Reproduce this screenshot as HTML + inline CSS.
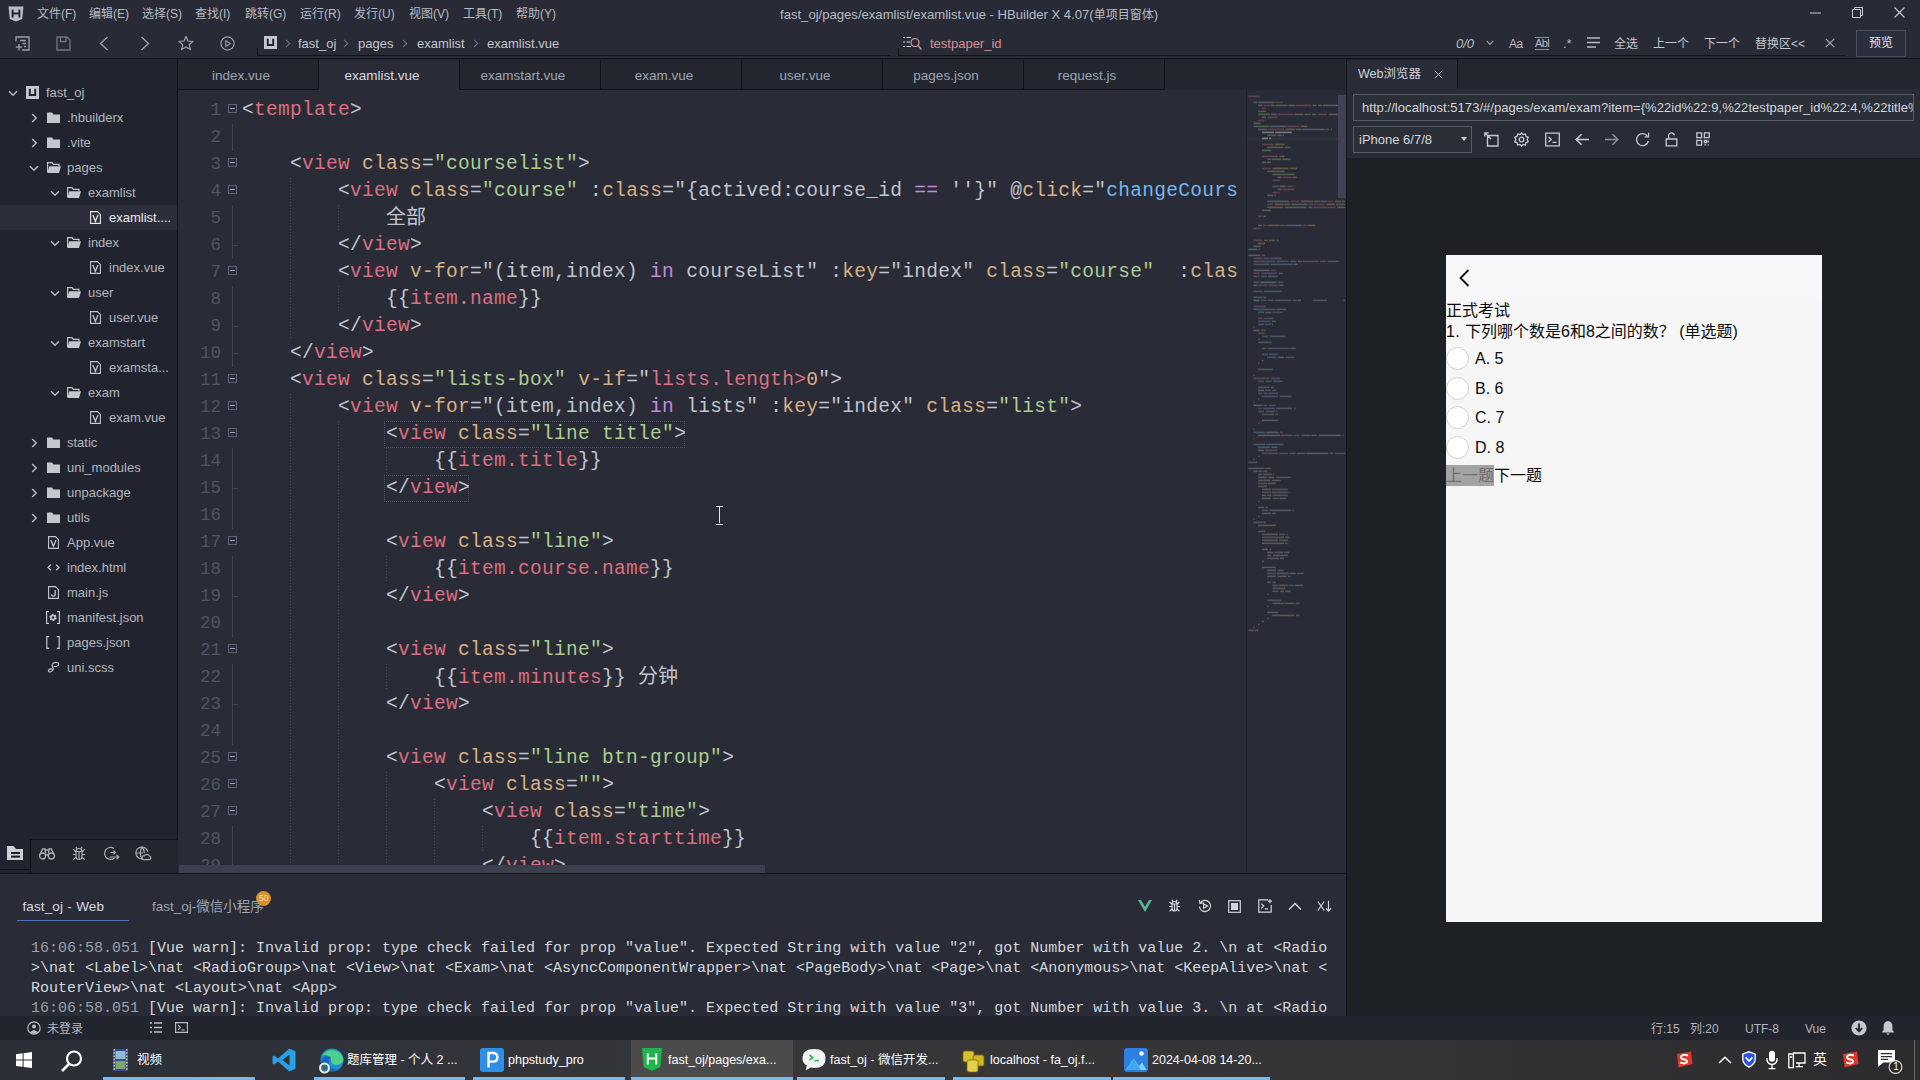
<!DOCTYPE html>
<html lang="zh-CN"><head><meta charset="utf-8"><title>HBuilder X</title>
<style>
*{box-sizing:border-box;margin:0;padding:0}
html,body{width:1920px;height:1080px;overflow:hidden;background:#21242e;}
body{position:relative;font-family:"Liberation Sans","Noto Sans CJK SC",sans-serif;color:#abb2bf;font-size:13px;}
.abs{position:absolute}
svg{display:block;overflow:visible}
/* top */
#titlebar{position:absolute;left:0;top:0;width:1920px;height:28px;background:#282b35;}
#toolbar{position:absolute;left:0;top:28px;width:1920px;height:31px;background:#282b35;}
#sidebar{position:absolute;left:0;top:59px;width:178px;height:814px;background:#21242e;}
#editor{position:absolute;left:178px;top:59px;width:1168px;height:814px;background:#292c36;}
#right{position:absolute;left:1347px;top:59px;width:573px;height:957px;background:#21252b;}
#console{position:absolute;left:0;top:873px;width:1347px;height:143px;background:#292c36;}
#status{position:absolute;left:0;top:1016px;width:1920px;height:24px;background:#22242e;}
#taskbar{position:absolute;left:0;top:1040px;width:1920px;height:40px;background:#2f2f2f;}
/* editor */
#tabbar{position:absolute;left:0;top:0;width:1167px;height:31px;background:#23262f;}
.tab{position:absolute;top:1px;width:141px;height:30px;line-height:31px;text-align:center;font-size:13.5px;padding-right:14px;color:#9da5b4;border-right:1px solid #12141b;border-bottom:1px solid #12141b;background:#23262f;}
.tab.act{background:#292c36;color:#d7dae0;border-bottom-color:#292c36;}
#code{position:absolute;left:1px;top:38px;width:1058px;height:770px;overflow:hidden;font-family:"Liberation Mono","Noto Sans CJK SC",monospace;font-size:19.5px;letter-spacing:0.3px;line-height:27px;color:#c0c5ce;}
.ln{position:relative;height:27px;}
.no{position:absolute;left:0;top:0;width:42px;text-align:right;color:#4f5464;font-size:17.5px;letter-spacing:0;}
.cd{position:absolute;left:63px;top:0;white-space:pre;}
.cd b{font-weight:normal}
b.t{color:#dc6f80}b.a{color:#d9b083}b.s{color:#a9cf90}b.k{color:#c688e0}b.f{color:#74b6ee}b.n{color:#d9b083}
b.c{font-size:20px;letter-spacing:0}
.fb{position:absolute;left:49px;top:7px;width:9px;height:9px;border:1px solid #5f6478;}
.fb:after{content:"";position:absolute;left:1px;top:3px;width:5px;height:1px;background:#a0a5b5}
.fl{position:absolute;left:53px;top:0;width:1px;height:27px;background:#3e4451}
.fe{position:absolute;left:53px;top:0;width:1px;height:27px;background:#3e4451}
.fe:after{content:"";position:absolute;left:1px;top:13px;width:5px;height:1px;background:#3e4451}
.ig{position:absolute;width:1px;background:repeating-linear-gradient(to bottom,#474c59 0,#474c59 1px,transparent 1px,transparent 3px);}
.mb{position:absolute;height:27px;border:1px dotted #4b5263;}
#hscroll{position:absolute;left:1px;top:806px;width:1067px;height:8px;}
#hscroll i{position:absolute;left:0;top:0;width:586px;height:8px;background:#3c404e}
#minimap{position:absolute;left:1068px;top:31px;width:100px;height:783px;border-left:1px solid #1f222b;}
/* sidebar */
#sidebar{border-right:1px solid #12141b;}
.tr{position:absolute;left:0;width:177px;height:25px;font-size:13px;color:#b1b6bf;}
.tr.sel{background:#2c2f3a;color:#e9ebee}
.tr span{position:absolute;top:0;line-height:25px;white-space:nowrap}
#sbbar{position:absolute;left:0;top:780px;width:177px;height:34px;}
#sbbar:before{content:"";position:absolute;left:30px;top:0;width:147px;height:34px;border-top:1px solid #12141b;border-left:1px solid #12141b;background:#23262f}
#sbact{position:absolute;left:0;top:0;width:30px;height:31px;border-bottom:1px solid #12141b;background:#21242e}
/* top */
.mn{position:absolute;top:1px;line-height:27px;font-size:12px;color:#b6bbc4;white-space:nowrap}
#wtitle{position:absolute;left:780px;top:1px;line-height:27px;font-size:13.1px;color:#b6bbc4;white-space:nowrap}
#toolbar{border-bottom:1px solid #12141b}
#bc{position:absolute;left:257px;top:20px;width:633px;height:8px;border-left:1px solid #12141b;border-bottom:1px solid #12141b}
#sb{position:absolute;left:898px;top:20px;width:947px;height:8px;border-left:1px solid #12141b;border-bottom:1px solid #12141b}
.bct{position:absolute;top:1px;line-height:30px;font-size:13px;color:#c2c6ce;white-space:nowrap}
#pv{position:absolute;left:1856px;top:2px;width:50px;height:27px;border:1px solid #4a4f66;background:#2b2e3d;color:#e6e8ec;font-size:12px;line-height:25px;text-align:center}
/* right */
#right{background:#1d2025;border-left:0}
#rtab{position:absolute;left:0;top:1px;width:111px;height:29px;background:#292c36;border-right:1px solid #12141b;padding-left:11px;line-height:28px;font-size:12.5px;color:#d0d4db;white-space:nowrap}
#right:before{content:"";position:absolute;left:111px;top:0;width:462px;height:30px;background:#23262f;border-bottom:1px solid #12141b;}
#rbar{position:absolute;left:0;top:30px;width:573px;height:70px;background:#292c36;border-bottom:1px solid #1b1d23}
#url{position:absolute;left:6px;top:5px;width:561px;height:27px;border:1px solid #565b68;background:#2b2f38;padding-left:8px;padding-right:4px;line-height:25px;font-size:13px;color:#d3d6dc;white-space:nowrap;overflow:hidden;letter-spacing:0.05px}
#dev{position:absolute;left:6px;top:37px;width:119px;height:27px;border:1px solid #565b68;background:#2b2f38;padding-left:5px;line-height:25px;font-size:13px;color:#d3d6dc;white-space:nowrap}
#dev i{position:absolute;left:107px;top:10px;border:3.5px solid transparent;border-top:4px solid #d3d6dc;border-bottom:0}
#phone{position:absolute;left:99px;top:196px;width:376px;height:667px;background:linear-gradient(#f8f7fa 0,#f8f7fa 44px,#f6f6f7 44px);color:#111;font-family:"Liberation Sans","Noto Sans CJK SC",sans-serif}
.pt{position:absolute;left:0;font-size:16px;line-height:21px;white-space:nowrap;color:#0b0b0b}
.rd{position:absolute;left:0;height:24px;}
.rd i{position:absolute;left:0;top:-1px;width:23px;height:23px;border:1px solid #d1d1d1;border-radius:50%;background:#fff}
.rd span{position:absolute;left:29px;top:0;line-height:21px;font-size:16px;white-space:nowrap;color:#0b0b0b}
.dis{background:#a3a3a3;color:#6f6f6f;display:inline-block;height:21px}
/* console */
#console{border-top:1px solid #12141b;border-right:1px solid #12141b}
.ct{position:absolute;top:22px;line-height:22px;font-size:13.5px;color:#9da5b4;white-space:nowrap}
.ct.act{color:#d7dae0}
#cul{position:absolute;left:17px;top:46px;width:112px;height:1px;background:#4c74b4}
#badge{position:absolute;left:256px;top:17px;width:15px;height:15px;border-radius:50%;background:#d98e34;color:#f7deb0;font-size:9px;line-height:15px;text-align:center;letter-spacing:-0.3px}
#clog{position:absolute;left:31px;top:65px;width:1310px;font-family:"Liberation Mono","Noto Sans CJK SC",monospace;font-size:15px;line-height:20px;color:#d3d7dd;overflow:hidden;height:81px}
#clog div{white-space:pre;height:20px}
#clog b{font-weight:normal;color:#99a0a8}
/* status */
.st{position:absolute;top:1px;line-height:24px;font-size:12px;color:#b1b6bf;white-space:nowrap}
/* taskbar */
#taskbar{background:linear-gradient(90deg,#2a2e36 0%,#30333a 20%,#373739 40%,#343436 70%,#2c2c2e 100%);font-family:"Liberation Sans","Noto Sans CJK SC",sans-serif}
.ti{position:absolute;top:0;height:40px;border-bottom:3px solid #76b9ed;}
.ti.act{background:#4b4b4b}
.ti span{position:absolute;top:1px;line-height:38px;font-size:12.5px;color:#fff;white-space:nowrap}
#ime{position:absolute;left:1813px;top:0;line-height:39px;font-size:14px;color:#fff}
#ncnt{position:absolute;left:1892px;top:20px;font-size:10px;line-height:14px;color:#fff;width:8px;text-align:center}
#tedge{position:absolute;left:1914px;top:0;width:1px;height:40px;background:#6a6a6a}
#vthumb{position:absolute;left:91px;top:5px;width:8px;height:103px;background:#3e4252}

#ibeam{position:absolute;left:538px;top:447px;width:7px;height:17px;}
#ibeam:before{content:"";position:absolute;left:3px;top:0;width:1px;height:17px;background:#e8e8e8}
#ibeam:after{content:"";position:absolute;left:0;top:0;width:7px;height:17px;border-top:1px solid #e8e8e8;border-bottom:1px solid #e8e8e8}

#rsep{position:absolute;left:1346px;top:59px;width:1px;height:957px;background:#12141b}

</style></head>
<body>
<div id="titlebar">
<svg class="abs" style="left:8px;top:6px" width="16" height="16" viewBox="0 0 16 16"><path d="M0.5 0.5 H15.5 L14.2 13 L8 15.5 L1.8 13 Z" fill="#b9bdc6"/><path d="M4.6 3.5 V11.5 M11.4 3.5 V11.5 M4.6 7.5 H11.4" stroke="#21252b" stroke-width="1.9" fill="none"/></svg>
<span class="mn" style="left:37px">文件(F)</span>
<span class="mn" style="left:89px">编辑(E)</span>
<span class="mn" style="left:142px">选择(S)</span>
<span class="mn" style="left:195px">查找(I)</span>
<span class="mn" style="left:245px">跳转(G)</span>
<span class="mn" style="left:300px">运行(R)</span>
<span class="mn" style="left:354px">发行(U)</span>
<span class="mn" style="left:409px">视图(V)</span>
<span class="mn" style="left:463px">工具(T)</span>
<span class="mn" style="left:516px">帮助(Y)</span>
<span id="wtitle">fast_oj/pages/examlist/examlist.vue - HBuilder X 4.07(<span style="font-size:12px">单项目窗体</span>)</span>
<svg class="abs" style="left:1810px;top:12px" width="11" height="2" viewBox="0 0 11 2"><path d="M0 1 H11" stroke="#c8ccd4" stroke-width="1"/></svg>
<svg class="abs" style="left:1852px;top:7px" width="11" height="11" viewBox="0 0 11 11"><path d="M0.5 2.5 H8.5 V10.5 H0.5 Z M2.5 2.5 V0.5 H10.5 V8.5 H8.5" fill="none" stroke="#c8ccd4" stroke-width="1"/></svg>
<svg class="abs" style="left:1894px;top:7px" width="11" height="11" viewBox="0 0 11 11"><path d="M0.5 0.5 L10.5 10.5 M10.5 0.5 L0.5 10.5" fill="none" stroke="#c8ccd4" stroke-width="1.1"/></svg>
</div>
<div id="toolbar">
<svg class="abs" style="left:15px;top:8px" width="15" height="15" viewBox="0 0 15 15"><g fill="none" stroke="#9aa0ab" stroke-width="1.3"><path d="M1 5.5 V1 H14 V14 H7"/><path d="M5 4.5 H11 M7.5 7.5 H11 M9 10.5 H11"/><path d="M4 8 V14.5 M0.8 11.2 H7.2"/></g></svg>
<svg class="abs" style="left:56px;top:8px" width="15" height="15" viewBox="0 0 15 15"><g fill="none" stroke="#6f7683" stroke-width="1.3"><path d="M1 1 H11 L14 4 V14 H1 Z"/><path d="M4.5 1 V5.5 H10 V1"/></g></svg>
<svg class="abs" style="left:99px;top:8px" width="10" height="15" viewBox="0 0 10 15"><path d="M8.5 1 L1.5 7.5 L8.5 14" fill="none" stroke="#9aa0ab" stroke-width="1.4"/></svg>
<svg class="abs" style="left:140px;top:8px" width="10" height="15" viewBox="0 0 10 15"><path d="M1.5 1 L8.5 7.5 L1.5 14" fill="none" stroke="#9aa0ab" stroke-width="1.4"/></svg>
<svg class="abs" style="left:178px;top:7px" width="16" height="16" viewBox="0 0 16 16"><path d="M8 1.3 L10 6 L15 6.4 L11.2 9.7 L12.4 14.6 L8 12 L3.6 14.6 L4.8 9.7 L1 6.4 L6 6 Z" fill="none" stroke="#9aa0ab" stroke-width="1.2" stroke-linejoin="round"/></svg>
<svg class="abs" style="left:220px;top:8px" width="15" height="15" viewBox="0 0 15 15"><circle cx="7.5" cy="7.5" r="6.6" fill="none" stroke="#9aa0ab" stroke-width="1.2"/><path d="M5.8 4.6 L10.3 7.5 L5.8 10.4 Z" fill="none" stroke="#9aa0ab" stroke-width="1.1"/></svg>
<div id="bc"></div>
<svg class="abs" style="left:264px;top:8px" width="13" height="13" viewBox="0 0 13 13"><rect width="13" height="13" fill="#c3c7ce"/><path d="M3.8 2.8 V9 H9.2 V2.8" fill="none" stroke="#21242e" stroke-width="1.9"/></svg>
<span class="bct" style="left:298px">fast_oj</span>
<span class="bct" style="left:358px">pages</span>
<span class="bct" style="left:417px">examlist</span>
<span class="bct" style="left:487px">examlist.vue</span>
<svg class="abs" style="left:285px;top:11px" width="6" height="9" viewBox="0 0 6 9"><path d="M1 0.8 L4.8 4.5 L1 8.2" fill="none" stroke="#6b7280" stroke-width="1.1"/></svg>
<svg class="abs" style="left:343px;top:11px" width="6" height="9" viewBox="0 0 6 9"><path d="M1 0.8 L4.8 4.5 L1 8.2" fill="none" stroke="#6b7280" stroke-width="1.1"/></svg>
<svg class="abs" style="left:402px;top:11px" width="6" height="9" viewBox="0 0 6 9"><path d="M1 0.8 L4.8 4.5 L1 8.2" fill="none" stroke="#6b7280" stroke-width="1.1"/></svg>
<svg class="abs" style="left:473px;top:11px" width="6" height="9" viewBox="0 0 6 9"><path d="M1 0.8 L4.8 4.5 L1 8.2" fill="none" stroke="#6b7280" stroke-width="1.1"/></svg>
<div id="sb"></div>
<svg class="abs" style="left:903px;top:8px" width="19" height="14" viewBox="0 0 19 14"><g fill="none" stroke="#d0d3d9" stroke-width="1.2"><path d="M0 1.5 H2 M3.5 1.5 H8 M0 6 H2 M3.5 6 H7 M0 10.5 H2 M3.5 10.5 H8"/></g><circle cx="12" cy="6.5" r="4" fill="none" stroke="#d9a29e" stroke-width="1.2"/><path d="M15 9.5 L18.5 13.5" stroke="#d9a29e" stroke-width="1.2"/></svg>
<span class="bct" style="left:930px;color:#dc8f8f">testpaper_id</span>
<span class="bct" style="left:1456px;font-style:italic;color:#b6bbc4">0/0</span>
<svg class="abs" style="left:1486px;top:12px" width="8" height="6" viewBox="0 0 8 6"><path d="M0.7 0.8 L4 4.4 L7.3 0.8" fill="none" stroke="#9aa0ab" stroke-width="1.1"/></svg>
<span class="bct" style="left:1509px;font-size:12px;letter-spacing:-0.5px;color:#b6bbc4">Aa</span>
<span class="bct" style="left:1535px;font-size:11px;letter-spacing:-0.6px;color:#b6bbc4;border-top:1px solid #8a8f9a;border-bottom:1px solid #8a8f9a;line-height:11px;top:9px;height:13px">Abl</span>
<span class="bct" style="left:1563px;font-size:13px;color:#b6bbc4">.*</span>
<svg class="abs" style="left:1587px;top:9px" width="13" height="12" viewBox="0 0 13 12"><path d="M0 1 H13 M0 5.5 H13 M0 10 H9" fill="none" stroke="#b6bbc4" stroke-width="1.3"/></svg>
<span class="bct" style="left:1614px;font-size:12px;color:#c2c6ce">全选</span>
<span class="bct" style="left:1653px;font-size:12px;color:#c2c6ce">上一个</span>
<span class="bct" style="left:1704px;font-size:12px;color:#c2c6ce">下一个</span>
<span class="bct" style="left:1755px;font-size:12px;color:#c2c6ce">替换区&lt;&lt;</span>
<svg class="abs" style="left:1825px;top:10px" width="10" height="10" viewBox="0 0 10 10"><path d="M0.8 0.8 L9.2 9.2 M9.2 0.8 L0.8 9.2" fill="none" stroke="#a6abb5" stroke-width="1.2"/></svg>
<div id="pv">预览</div>
</div>
<div id="sidebar">
<div class="tr" style="top:21px">
<svg class="abs" style="left:8px;top:10px" width="10" height="7" viewBox="0 0 10 7"><path d="M1 1.2 L5 5.2 L9 1.2" fill="none" stroke="#b4b9c2" stroke-width="1.5"/></svg>
<svg class="abs" style="left:26px;top:6px" width="13" height="13" viewBox="0 0 13 13"><rect x="0" y="0" width="13" height="13" fill="#c3c7ce"/><path d="M3.8 2.8 V9 H9.2 V2.8" fill="none" stroke="#21242e" stroke-width="1.9"/></svg>
<span style="left:46px">fast_oj</span></div>
<div class="tr" style="top:46px">
<svg class="abs" style="left:31px;top:8px" width="7" height="10" viewBox="0 0 7 10"><path d="M1.2 1 L5.2 5 L1.2 9" fill="none" stroke="#b4b9c2" stroke-width="1.5"/></svg>
<svg class="abs" style="left:47px;top:7px" width="13" height="11" viewBox="0 0 13 11"><path d="M0 0.5 H5 L6.5 2.5 H13 V11 H0 Z" fill="#c3c7ce"/></svg>
<span style="left:67px">.hbuilderx</span></div>
<div class="tr" style="top:71px">
<svg class="abs" style="left:31px;top:8px" width="7" height="10" viewBox="0 0 7 10"><path d="M1.2 1 L5.2 5 L1.2 9" fill="none" stroke="#b4b9c2" stroke-width="1.5"/></svg>
<svg class="abs" style="left:47px;top:7px" width="13" height="11" viewBox="0 0 13 11"><path d="M0 0.5 H5 L6.5 2.5 H13 V11 H0 Z" fill="#c3c7ce"/></svg>
<span style="left:67px">.vite</span></div>
<div class="tr" style="top:96px">
<svg class="abs" style="left:29px;top:10px" width="10" height="7" viewBox="0 0 10 7"><path d="M1 1.2 L5 5.2 L9 1.2" fill="none" stroke="#b4b9c2" stroke-width="1.5"/></svg>
<svg class="abs" style="left:47px;top:7px" width="14" height="11" viewBox="0 0 14 11"><path d="M0.6 10 V0.6 H5 L6.3 2.3 H12 V4" fill="none" stroke="#c3c7ce" stroke-width="1.2"/><path d="M2.2 4.2 H14 L12 11 H0.3 Z" fill="#c3c7ce"/></svg>
<span style="left:67px">pages</span></div>
<div class="tr" style="top:121px">
<svg class="abs" style="left:50px;top:10px" width="10" height="7" viewBox="0 0 10 7"><path d="M1 1.2 L5 5.2 L9 1.2" fill="none" stroke="#b4b9c2" stroke-width="1.5"/></svg>
<svg class="abs" style="left:67px;top:7px" width="14" height="11" viewBox="0 0 14 11"><path d="M0.6 10 V0.6 H5 L6.3 2.3 H12 V4" fill="none" stroke="#c3c7ce" stroke-width="1.2"/><path d="M2.2 4.2 H14 L12 11 H0.3 Z" fill="#c3c7ce"/></svg>
<span style="left:88px">examlist</span></div>
<div class="tr sel" style="top:146px">
<svg class="abs" style="left:90px;top:6px" width="11" height="13" viewBox="0 0 11 13"><path d="M0.6 0.6 H7.4 L10.4 3.6 V12.4 H0.6 Z" fill="none" stroke="#e6e8ec" stroke-width="1.1"/><path d="M2.8 4 L5.4 10.2 L8 4" fill="none" stroke="#e6e8ec" stroke-width="1.3"/></svg>
<span style="left:109px">examlist....</span></div>
<div class="tr" style="top:171px">
<svg class="abs" style="left:50px;top:10px" width="10" height="7" viewBox="0 0 10 7"><path d="M1 1.2 L5 5.2 L9 1.2" fill="none" stroke="#b4b9c2" stroke-width="1.5"/></svg>
<svg class="abs" style="left:67px;top:7px" width="14" height="11" viewBox="0 0 14 11"><path d="M0.6 10 V0.6 H5 L6.3 2.3 H12 V4" fill="none" stroke="#c3c7ce" stroke-width="1.2"/><path d="M2.2 4.2 H14 L12 11 H0.3 Z" fill="#c3c7ce"/></svg>
<span style="left:88px">index</span></div>
<div class="tr" style="top:196px">
<svg class="abs" style="left:90px;top:6px" width="11" height="13" viewBox="0 0 11 13"><path d="M0.6 0.6 H7.4 L10.4 3.6 V12.4 H0.6 Z" fill="none" stroke="#c3c7ce" stroke-width="1.1"/><path d="M2.8 4 L5.4 10.2 L8 4" fill="none" stroke="#c3c7ce" stroke-width="1.3"/></svg>
<span style="left:109px">index.vue</span></div>
<div class="tr" style="top:221px">
<svg class="abs" style="left:50px;top:10px" width="10" height="7" viewBox="0 0 10 7"><path d="M1 1.2 L5 5.2 L9 1.2" fill="none" stroke="#b4b9c2" stroke-width="1.5"/></svg>
<svg class="abs" style="left:67px;top:7px" width="14" height="11" viewBox="0 0 14 11"><path d="M0.6 10 V0.6 H5 L6.3 2.3 H12 V4" fill="none" stroke="#c3c7ce" stroke-width="1.2"/><path d="M2.2 4.2 H14 L12 11 H0.3 Z" fill="#c3c7ce"/></svg>
<span style="left:88px">user</span></div>
<div class="tr" style="top:246px">
<svg class="abs" style="left:90px;top:6px" width="11" height="13" viewBox="0 0 11 13"><path d="M0.6 0.6 H7.4 L10.4 3.6 V12.4 H0.6 Z" fill="none" stroke="#c3c7ce" stroke-width="1.1"/><path d="M2.8 4 L5.4 10.2 L8 4" fill="none" stroke="#c3c7ce" stroke-width="1.3"/></svg>
<span style="left:109px">user.vue</span></div>
<div class="tr" style="top:271px">
<svg class="abs" style="left:50px;top:10px" width="10" height="7" viewBox="0 0 10 7"><path d="M1 1.2 L5 5.2 L9 1.2" fill="none" stroke="#b4b9c2" stroke-width="1.5"/></svg>
<svg class="abs" style="left:67px;top:7px" width="14" height="11" viewBox="0 0 14 11"><path d="M0.6 10 V0.6 H5 L6.3 2.3 H12 V4" fill="none" stroke="#c3c7ce" stroke-width="1.2"/><path d="M2.2 4.2 H14 L12 11 H0.3 Z" fill="#c3c7ce"/></svg>
<span style="left:88px">examstart</span></div>
<div class="tr" style="top:296px">
<svg class="abs" style="left:90px;top:6px" width="11" height="13" viewBox="0 0 11 13"><path d="M0.6 0.6 H7.4 L10.4 3.6 V12.4 H0.6 Z" fill="none" stroke="#c3c7ce" stroke-width="1.1"/><path d="M2.8 4 L5.4 10.2 L8 4" fill="none" stroke="#c3c7ce" stroke-width="1.3"/></svg>
<span style="left:109px">examsta...</span></div>
<div class="tr" style="top:321px">
<svg class="abs" style="left:50px;top:10px" width="10" height="7" viewBox="0 0 10 7"><path d="M1 1.2 L5 5.2 L9 1.2" fill="none" stroke="#b4b9c2" stroke-width="1.5"/></svg>
<svg class="abs" style="left:67px;top:7px" width="14" height="11" viewBox="0 0 14 11"><path d="M0.6 10 V0.6 H5 L6.3 2.3 H12 V4" fill="none" stroke="#c3c7ce" stroke-width="1.2"/><path d="M2.2 4.2 H14 L12 11 H0.3 Z" fill="#c3c7ce"/></svg>
<span style="left:88px">exam</span></div>
<div class="tr" style="top:346px">
<svg class="abs" style="left:90px;top:6px" width="11" height="13" viewBox="0 0 11 13"><path d="M0.6 0.6 H7.4 L10.4 3.6 V12.4 H0.6 Z" fill="none" stroke="#c3c7ce" stroke-width="1.1"/><path d="M2.8 4 L5.4 10.2 L8 4" fill="none" stroke="#c3c7ce" stroke-width="1.3"/></svg>
<span style="left:109px">exam.vue</span></div>
<div class="tr" style="top:371px">
<svg class="abs" style="left:31px;top:8px" width="7" height="10" viewBox="0 0 7 10"><path d="M1.2 1 L5.2 5 L1.2 9" fill="none" stroke="#b4b9c2" stroke-width="1.5"/></svg>
<svg class="abs" style="left:47px;top:7px" width="13" height="11" viewBox="0 0 13 11"><path d="M0 0.5 H5 L6.5 2.5 H13 V11 H0 Z" fill="#c3c7ce"/></svg>
<span style="left:67px">static</span></div>
<div class="tr" style="top:396px">
<svg class="abs" style="left:31px;top:8px" width="7" height="10" viewBox="0 0 7 10"><path d="M1.2 1 L5.2 5 L1.2 9" fill="none" stroke="#b4b9c2" stroke-width="1.5"/></svg>
<svg class="abs" style="left:47px;top:7px" width="13" height="11" viewBox="0 0 13 11"><path d="M0 0.5 H5 L6.5 2.5 H13 V11 H0 Z" fill="#c3c7ce"/></svg>
<span style="left:67px">uni_modules</span></div>
<div class="tr" style="top:421px">
<svg class="abs" style="left:31px;top:8px" width="7" height="10" viewBox="0 0 7 10"><path d="M1.2 1 L5.2 5 L1.2 9" fill="none" stroke="#b4b9c2" stroke-width="1.5"/></svg>
<svg class="abs" style="left:47px;top:7px" width="13" height="11" viewBox="0 0 13 11"><path d="M0 0.5 H5 L6.5 2.5 H13 V11 H0 Z" fill="#c3c7ce"/></svg>
<span style="left:67px">unpackage</span></div>
<div class="tr" style="top:446px">
<svg class="abs" style="left:31px;top:8px" width="7" height="10" viewBox="0 0 7 10"><path d="M1.2 1 L5.2 5 L1.2 9" fill="none" stroke="#b4b9c2" stroke-width="1.5"/></svg>
<svg class="abs" style="left:47px;top:7px" width="13" height="11" viewBox="0 0 13 11"><path d="M0 0.5 H5 L6.5 2.5 H13 V11 H0 Z" fill="#c3c7ce"/></svg>
<span style="left:67px">utils</span></div>
<div class="tr" style="top:471px">
<svg class="abs" style="left:48px;top:6px" width="11" height="13" viewBox="0 0 11 13"><path d="M0.6 0.6 H7.4 L10.4 3.6 V12.4 H0.6 Z" fill="none" stroke="#c3c7ce" stroke-width="1.1"/><path d="M2.8 4 L5.4 10.2 L8 4" fill="none" stroke="#c3c7ce" stroke-width="1.3"/></svg>
<span style="left:67px">App.vue</span></div>
<div class="tr" style="top:496px">
<svg class="abs" style="left:47px;top:9px" width="13" height="7" viewBox="0 0 13 7"><path d="M4 0.6 L1 3.5 L4 6.4 M9 0.6 L12 3.5 L9 6.4" fill="none" stroke="#c3c7ce" stroke-width="1.3"/></svg>
<span style="left:67px">index.html</span></div>
<div class="tr" style="top:521px">
<svg class="abs" style="left:48px;top:6px" width="11" height="13" viewBox="0 0 11 13"><path d="M0.6 0.6 H7.4 L10.4 3.6 V12.4 H0.6 Z" fill="none" stroke="#c3c7ce" stroke-width="1.1"/><path d="M7.2 4 V8.4 Q7.2 10.2 5.4 10.2 Q3.6 10.2 3.4 8.4" fill="none" stroke="#c3c7ce" stroke-width="1.3"/></svg>
<span style="left:67px">main.js</span></div>
<div class="tr" style="top:546px">
<svg class="abs" style="left:46px;top:6px" width="14" height="13" viewBox="0 0 14 13"><path d="M3 0.6 H0.6 V12.4 H3 M11 0.6 H13.4 V12.4 H11" fill="none" stroke="#c3c7ce" stroke-width="1.2"/><circle cx="7" cy="6.5" r="2.6" fill="none" stroke="#c3c7ce" stroke-width="2.2" stroke-dasharray="1.6 1.1"/><circle cx="7" cy="6.5" r="2" fill="none" stroke="#c3c7ce" stroke-width="1.4"/></svg>
<span style="left:67px">manifest.json</span></div>
<div class="tr" style="top:571px">
<svg class="abs" style="left:46px;top:6px" width="14" height="13" viewBox="0 0 14 13"><path d="M3.2 0.6 H0.8 V12.4 H3.2 M10.8 0.6 H13.2 V12.4 H10.8" fill="none" stroke="#c3c7ce" stroke-width="1.2"/></svg>
<span style="left:67px">pages.json</span></div>
<div class="tr" style="top:596px">
<svg class="abs" style="left:47px;top:6px" width="13" height="13" viewBox="0 0 13 13"><path d="M11.8 3.2 C11.8 0.6 6.2 0.8 5 3.6 C4.2 5.6 7 6.4 6.2 8.6 C5.4 10.8 2 11.8 1.4 10 C0.9 8.2 4.4 7.2 5.6 8.6 M11.8 3.2 C11.6 5.4 8 5.8 6.4 5.2" fill="none" stroke="#c3c7ce" stroke-width="1.1"/></svg>
<span style="left:67px">uni.scss</span></div>
<div id="sbbar"><div id="sbact"></div>
<svg class="abs" style="left:7px;top:7px" width="16" height="14" viewBox="0 0 16 14"><path d="M0 0 H6.5 L9 3 H16 V14 H0 Z" fill="#cdd0d6"/><rect x="4" y="6" width="9" height="2" fill="#181a1f"/><rect x="4" y="9.6" width="9" height="2" fill="#181a1f"/></svg>
<svg class="abs" style="left:39px;top:8px" width="16" height="13" viewBox="0 0 16 13"><g fill="none" stroke="#a9aeb8" stroke-width="1.3"><circle cx="3.6" cy="9" r="3"/><circle cx="12.4" cy="9" r="3"/><path d="M1 7.5 L3.6 2 H6 L6.6 6.5 M15 7.5 L12.4 2 H10 L9.4 6.5 M6 3 H10 M6.6 8 H9.4"/></g></svg>
<svg class="abs" style="left:72px;top:7px" width="14" height="15" viewBox="0 0 14 15"><g fill="none" stroke="#a9aeb8" stroke-width="1.2"><path d="M4 5.5 Q4 2.5 7 2.5 Q10 2.5 10 5.5 V10 Q10 13.5 7 13.5 Q4 13.5 4 10 Z M7 5.5 V13 M4 5.5 H10 M4 8.5 H0.8 M10 8.5 H13.2 M4 6 L1.2 3.2 M10 6 L12.8 3.2 M4.3 11 L1.2 13.8 M9.7 11 L12.8 13.8 M5 2.8 L3.8 0.8 M9 2.8 L10.2 0.8"/></g></svg>
<svg class="abs" style="left:103px;top:7px" width="17" height="15" viewBox="0 0 17 15"><g fill="none" stroke="#a9aeb8" stroke-width="1.2"><path d="M11 2.5 A6 6 0 1 0 11.5 12"/><path d="M7.5 6.5 H12 M10.4 4.6 L12.4 6.5 L10.4 8.4 M6.5 11 H15.5 M13.5 8.8 L15.8 11 L13.5 13.2"/></g></svg>
<svg class="abs" style="left:135px;top:7px" width="17" height="15" viewBox="0 0 17 15"><g fill="none" stroke="#a9aeb8" stroke-width="1.2"><path d="M7 13 A6 6 0 1 1 12.8 6 M1 7 H8 M7 1 Q3.5 7 7 13 M7 1 Q9.5 4 9.3 7.4"/><path d="M8.5 13.6 H14.6 A1.9 1.9 0 0 0 14.4 10 A2.6 2.6 0 0 0 9.6 9.8 A1.9 1.9 0 0 0 8.5 13.6 Z"/></g></svg>
</div></div>
<div id="editor">
<div id="tabbar">
<div class="tab" style="left:0px">index.vue</div>
<div class="tab act" style="left:141px">examlist.vue</div>
<div class="tab" style="left:282px">examstart.vue</div>
<div class="tab" style="left:423px">exam.vue</div>
<div class="tab" style="left:564px">user.vue</div>
<div class="tab" style="left:705px">pages.json</div>
<div class="tab" style="left:846px">request.js</div>
</div>
<div id="code">
<i class="ig" style="left:111px;top:81px;height:162px"></i>
<i class="ig" style="left:159px;top:108px;height:27px"></i>
<i class="ig" style="left:159px;top:189px;height:27px"></i>
<i class="ig" style="left:111px;top:297px;height:513px"></i>
<i class="ig" style="left:159px;top:324px;height:486px"></i>
<i class="ig" style="left:207px;top:351px;height:27px"></i>
<i class="ig" style="left:207px;top:459px;height:27px"></i>
<i class="ig" style="left:207px;top:567px;height:27px"></i>
<i class="ig" style="left:207px;top:675px;height:135px"></i>
<i class="ig" style="left:255px;top:702px;height:108px"></i>
<i class="ig" style="left:303px;top:729px;height:27px"></i>
<i class="mb" style="left:205px;top:324px;width:301px"></i>
<i class="mb" style="left:205px;top:378px;width:85px"></i>
<div class="ln"><span class="no">1</span><i class="fb"></i><span class="cd">&lt;<b class="t">template</b>&gt;</span></div>
<div class="ln"><span class="no">2</span><i class="fl"></i><span class="cd"></span></div>
<div class="ln"><span class="no">3</span><i class="fb"></i><span class="cd">    &lt;<b class="t">view</b> <b class="a">class</b>=<b class="s">"courselist"</b>&gt;</span></div>
<div class="ln"><span class="no">4</span><i class="fb"></i><span class="cd">        &lt;<b class="t">view</b> <b class="a">class</b>=<b class="s">"course"</b> :<b class="a">class</b>="{actived:course_id <b class="k">==</b> ''}" @<b class="a">click</b>="<b class="f">changeCours</b></span></div>
<div class="ln"><span class="no">5</span><i class="fl"></i><span class="cd">            <b class="c">全部</b></span></div>
<div class="ln"><span class="no">6</span><i class="fe"></i><span class="cd">        &lt;/<b class="t">view</b>&gt;</span></div>
<div class="ln"><span class="no">7</span><i class="fb"></i><span class="cd">        &lt;<b class="t">view</b> <b class="a">v-for</b>="(item,index) <b class="k">in</b> courseList" :<b class="a">key</b>="index" <b class="a">class</b>=<b class="s">"course"</b>  :<b class="a">clas</b></span></div>
<div class="ln"><span class="no">8</span><i class="fl"></i><span class="cd">            {{<b class="t">item.name</b>}}</span></div>
<div class="ln"><span class="no">9</span><i class="fe"></i><span class="cd">        &lt;/<b class="t">view</b>&gt;</span></div>
<div class="ln"><span class="no">10</span><i class="fe"></i><span class="cd">    &lt;/<b class="t">view</b>&gt;</span></div>
<div class="ln"><span class="no">11</span><i class="fb"></i><span class="cd">    &lt;<b class="t">view</b> <b class="a">class</b>=<b class="s">"lists-box"</b> <b class="a">v-if</b>="<b class="t">lists.length&gt;</b><b class="n">0</b>"&gt;</span></div>
<div class="ln"><span class="no">12</span><i class="fb"></i><span class="cd">        &lt;<b class="t">view</b> <b class="a">v-for</b>="(item,index) <b class="k">in</b> lists" :<b class="a">key</b>="index" <b class="a">class</b>=<b class="s">"list"</b>&gt;</span></div>
<div class="ln"><span class="no">13</span><i class="fb"></i><span class="cd">            &lt;<b class="t">view</b> <b class="a">class</b>=<b class="s">"line title"</b>&gt;</span></div>
<div class="ln"><span class="no">14</span><i class="fl"></i><span class="cd">                {{<b class="t">item.title</b>}}</span></div>
<div class="ln"><span class="no">15</span><i class="fe"></i><span class="cd">            &lt;/<b class="t">view</b>&gt;</span></div>
<div class="ln"><span class="no">16</span><i class="fl"></i><span class="cd"></span></div>
<div class="ln"><span class="no">17</span><i class="fb"></i><span class="cd">            &lt;<b class="t">view</b> <b class="a">class</b>=<b class="s">"line"</b>&gt;</span></div>
<div class="ln"><span class="no">18</span><i class="fl"></i><span class="cd">                {{<b class="t">item.course.name</b>}}</span></div>
<div class="ln"><span class="no">19</span><i class="fe"></i><span class="cd">            &lt;/<b class="t">view</b>&gt;</span></div>
<div class="ln"><span class="no">20</span><i class="fl"></i><span class="cd"></span></div>
<div class="ln"><span class="no">21</span><i class="fb"></i><span class="cd">            &lt;<b class="t">view</b> <b class="a">class</b>=<b class="s">"line"</b>&gt;</span></div>
<div class="ln"><span class="no">22</span><i class="fl"></i><span class="cd">                {{<b class="t">item.minutes</b>}} <b class="c">分钟</b></span></div>
<div class="ln"><span class="no">23</span><i class="fe"></i><span class="cd">            &lt;/<b class="t">view</b>&gt;</span></div>
<div class="ln"><span class="no">24</span><i class="fl"></i><span class="cd"></span></div>
<div class="ln"><span class="no">25</span><i class="fb"></i><span class="cd">            &lt;<b class="t">view</b> <b class="a">class</b>=<b class="s">"line btn-group"</b>&gt;</span></div>
<div class="ln"><span class="no">26</span><i class="fb"></i><span class="cd">                &lt;<b class="t">view</b> <b class="a">class</b>=<b class="s">""</b>&gt;</span></div>
<div class="ln"><span class="no">27</span><i class="fb"></i><span class="cd">                    &lt;<b class="t">view</b> <b class="a">class</b>=<b class="s">"time"</b>&gt;</span></div>
<div class="ln"><span class="no">28</span><i class="fl"></i><span class="cd">                        {{<b class="t">item.starttime</b>}}</span></div>
<div class="ln"><span class="no">29</span><i class="fe"></i><span class="cd">                    &lt;/<b class="t">view</b>&gt;</span></div>
</div>
<div id="hscroll"><i></i></div>
<div id="minimap"><svg class="abs" style="left:0;top:0" width="99" height="560" viewBox="0 0 99 560">
<rect x="0" y="47.5" width="91" height="3" fill="#2f333d"/>
<g opacity="0.55">
<rect x="1.3" y="5.6" width="9.0" height="1.6" fill="#8a5560"/>
<rect x="11.1" y="5.6" width="1.3" height="1.6" fill="#8c7a62"/>
<rect x="6.5" y="11.6" width="4.0" height="1.6" fill="#6f8a62"/>
<rect x="11.3" y="11.6" width="16.0" height="1.6" fill="#7d838f"/>
<rect x="28.1" y="11.6" width="7.7" height="1.6" fill="#8a5560"/>
<rect x="11.1" y="14.6" width="4.0" height="1.6" fill="#7d838f"/>
<rect x="16.7" y="14.6" width="6.0" height="1.6" fill="#8a5560"/>
<rect x="23.5" y="14.6" width="4.0" height="1.6" fill="#8c7a62"/>
<rect x="28.7" y="14.6" width="12.0" height="1.6" fill="#6f8a62"/>
<rect x="41.5" y="14.6" width="6.0" height="1.6" fill="#7d838f"/>
<rect x="48.3" y="14.6" width="16.0" height="1.6" fill="#8a5560"/>
<rect x="65.5" y="14.6" width="4.0" height="1.6" fill="#8c7a62"/>
<rect x="71.1" y="14.6" width="4.0" height="1.6" fill="#6f8a62"/>
<rect x="75.9" y="14.6" width="20.8" height="1.6" fill="#7d838f"/>
<rect x="15.0" y="17.6" width="3.9" height="1.6" fill="#8a5560"/>
<rect x="11.1" y="20.6" width="7.8" height="1.6" fill="#8c7a62"/>
<rect x="11.1" y="23.6" width="12.0" height="1.6" fill="#6f8a62"/>
<rect x="23.9" y="23.6" width="6.0" height="1.6" fill="#7d838f"/>
<rect x="30.7" y="23.6" width="16.0" height="1.6" fill="#8a5560"/>
<rect x="47.5" y="23.6" width="9.0" height="1.6" fill="#8c7a62"/>
<rect x="57.7" y="23.6" width="6.0" height="1.6" fill="#6f8a62"/>
<rect x="65.3" y="23.6" width="4.0" height="1.6" fill="#7d838f"/>
<rect x="70.9" y="23.6" width="9.0" height="1.6" fill="#8a5560"/>
<rect x="81.5" y="23.6" width="15.2" height="1.6" fill="#8c7a62"/>
<rect x="15.0" y="26.6" width="4.0" height="1.6" fill="#7d838f"/>
<rect x="20.6" y="26.6" width="10.0" height="1.6" fill="#8a5560"/>
<rect x="11.1" y="29.6" width="6.0" height="1.6" fill="#8a5560"/>
<rect x="18.3" y="29.6" width="0.6" height="1.6" fill="#8c7a62"/>
<rect x="6.5" y="32.6" width="7.3" height="1.6" fill="#8c7a62"/>
<rect x="6.5" y="35.6" width="16.0" height="1.6" fill="#6f8a62"/>
<rect x="23.3" y="35.6" width="16.0" height="1.6" fill="#7d838f"/>
<rect x="40.1" y="35.6" width="12.0" height="1.6" fill="#8a5560"/>
<rect x="53.7" y="35.6" width="6.7" height="1.6" fill="#8c7a62"/>
<rect x="11.1" y="38.6" width="9.0" height="1.6" fill="#7d838f"/>
<rect x="21.3" y="38.6" width="16.0" height="1.6" fill="#8a5560"/>
<rect x="38.5" y="38.6" width="9.0" height="1.6" fill="#8c7a62"/>
<rect x="48.7" y="38.6" width="6.0" height="1.6" fill="#6f8a62"/>
<rect x="55.5" y="38.6" width="22.0" height="1.6" fill="#7d838f"/>
<rect x="78.3" y="38.6" width="4.0" height="1.6" fill="#8a5560"/>
<rect x="83.9" y="38.6" width="1.1" height="1.6" fill="#8c7a62"/>
<rect x="15.0" y="41.6" width="12.0" height="1.6" fill="#b9bcc4"/>
<rect x="28.2" y="41.6" width="16.6" height="1.6" fill="#b9bcc4"/>
<rect x="20.2" y="44.6" width="9.0" height="1.6" fill="#8c7a62"/>
<rect x="30.8" y="44.6" width="4.0" height="1.6" fill="#6f8a62"/>
<rect x="35.6" y="44.6" width="1.5" height="1.6" fill="#7d838f"/>
<rect x="15.0" y="47.6" width="6.0" height="1.6" fill="#b9bcc4"/>
<rect x="22.2" y="47.6" width="1.9" height="1.6" fill="#b9bcc4"/>
<rect x="15.0" y="53.6" width="12.0" height="1.6" fill="#8a5560"/>
<rect x="27.8" y="53.6" width="9.8" height="1.6" fill="#8c7a62"/>
<rect x="20.2" y="56.6" width="16.0" height="1.6" fill="#8c7a62"/>
<rect x="37.8" y="56.6" width="5.7" height="1.6" fill="#6f8a62"/>
<rect x="15.0" y="59.6" width="9.1" height="1.6" fill="#6f8a62"/>
<rect x="15.0" y="65.6" width="16.0" height="1.6" fill="#8a5560"/>
<rect x="32.2" y="65.6" width="5.4" height="1.6" fill="#8c7a62"/>
<rect x="20.2" y="68.6" width="4.0" height="1.6" fill="#8c7a62"/>
<rect x="25.0" y="68.6" width="9.0" height="1.6" fill="#6f8a62"/>
<rect x="35.2" y="68.6" width="8.3" height="1.6" fill="#7d838f"/>
<rect x="15.0" y="71.6" width="4.0" height="1.6" fill="#6f8a62"/>
<rect x="19.8" y="71.6" width="4.3" height="1.6" fill="#7d838f"/>
<rect x="15.0" y="77.6" width="9.0" height="1.6" fill="#8a5560"/>
<rect x="25.6" y="77.6" width="16.0" height="1.6" fill="#8c7a62"/>
<rect x="43.2" y="77.6" width="6.8" height="1.6" fill="#6f8a62"/>
<rect x="20.2" y="80.6" width="17.4" height="1.6" fill="#8c7a62"/>
<rect x="25.4" y="83.6" width="22.0" height="1.6" fill="#6f8a62"/>
<rect x="30.6" y="86.6" width="4.0" height="1.6" fill="#7d838f"/>
<rect x="35.8" y="86.6" width="9.0" height="1.6" fill="#8a5560"/>
<rect x="45.6" y="86.6" width="4.4" height="1.6" fill="#8c7a62"/>
<rect x="25.4" y="89.6" width="7.8" height="1.6" fill="#8a5560"/>
<rect x="25.4" y="95.6" width="6.0" height="1.6" fill="#6f8a62"/>
<rect x="32.6" y="95.6" width="6.0" height="1.6" fill="#7d838f"/>
<rect x="40.2" y="95.6" width="6.0" height="1.6" fill="#8a5560"/>
<rect x="47.4" y="95.6" width="0.6" height="1.6" fill="#8c7a62"/>
<rect x="30.6" y="98.6" width="4.0" height="1.6" fill="#7d838f"/>
<rect x="35.4" y="98.6" width="12.0" height="1.6" fill="#8a5560"/>
<rect x="25.4" y="101.6" width="7.8" height="1.6" fill="#8a5560"/>
<rect x="20.2" y="104.6" width="6.0" height="1.6" fill="#8c7a62"/>
<rect x="27.4" y="104.6" width="1.4" height="1.6" fill="#6f8a62"/>
<rect x="20.2" y="110.6" width="22.0" height="1.6" fill="#7d838f"/>
<rect x="43.4" y="110.6" width="9.0" height="1.6" fill="#8a5560"/>
<rect x="54.0" y="110.6" width="12.0" height="1.6" fill="#8c7a62"/>
<rect x="66.8" y="110.6" width="6.0" height="1.6" fill="#6f8a62"/>
<rect x="73.6" y="110.6" width="6.0" height="1.6" fill="#7d838f"/>
<rect x="80.4" y="110.6" width="6.0" height="1.6" fill="#8a5560"/>
<rect x="88.0" y="110.6" width="6.0" height="1.6" fill="#8c7a62"/>
<rect x="94.8" y="110.6" width="3.2" height="1.6" fill="#6f8a62"/>
<rect x="20.2" y="113.6" width="6.0" height="1.6" fill="#8a5560"/>
<rect x="27.4" y="113.6" width="9.0" height="1.6" fill="#8c7a62"/>
<rect x="37.2" y="113.6" width="6.0" height="1.6" fill="#6f8a62"/>
<rect x="44.4" y="113.6" width="16.0" height="1.6" fill="#7d838f"/>
<rect x="61.6" y="113.6" width="16.0" height="1.6" fill="#8a5560"/>
<rect x="79.2" y="113.6" width="9.0" height="1.6" fill="#8c7a62"/>
<rect x="89.0" y="113.6" width="9.0" height="1.6" fill="#6f8a62"/>
<rect x="20.2" y="116.6" width="16.0" height="1.6" fill="#8c7a62"/>
<rect x="37.8" y="116.6" width="22.0" height="1.6" fill="#6f8a62"/>
<rect x="61.4" y="116.6" width="4.0" height="1.6" fill="#7d838f"/>
<rect x="66.6" y="116.6" width="22.0" height="1.6" fill="#8a5560"/>
<rect x="90.2" y="116.6" width="7.8" height="1.6" fill="#8c7a62"/>
<rect x="15.0" y="119.6" width="9.1" height="1.6" fill="#6f8a62"/>
<rect x="11.1" y="125.6" width="4.0" height="1.6" fill="#8a5560"/>
<rect x="16.3" y="125.6" width="2.6" height="1.6" fill="#8c7a62"/>
<rect x="11.1" y="134.6" width="4.0" height="1.6" fill="#7d838f"/>
<rect x="15.9" y="134.6" width="4.0" height="1.6" fill="#8a5560"/>
<rect x="20.7" y="134.6" width="12.0" height="1.6" fill="#8c7a62"/>
<rect x="33.5" y="134.6" width="4.0" height="1.6" fill="#6f8a62"/>
<rect x="38.7" y="134.6" width="16.0" height="1.6" fill="#7d838f"/>
<rect x="55.5" y="134.6" width="4.0" height="1.6" fill="#8a5560"/>
<rect x="60.3" y="134.6" width="7.8" height="1.6" fill="#8c7a62"/>
<rect x="6.5" y="137.6" width="7.3" height="1.6" fill="#8a5560"/>
<rect x="6.5" y="149.6" width="9.0" height="1.6" fill="#8a5560"/>
<rect x="17.1" y="149.6" width="4.0" height="1.6" fill="#8c7a62"/>
<rect x="21.9" y="149.6" width="6.0" height="1.6" fill="#6f8a62"/>
<rect x="29.5" y="149.6" width="2.4" height="1.6" fill="#7d838f"/>
<rect x="11.1" y="152.6" width="7.0" height="1.6" fill="#8c7a62"/>
<rect x="6.5" y="155.6" width="7.3" height="1.6" fill="#6f8a62"/>
<rect x="1.3" y="158.6" width="9.0" height="1.6" fill="#7d838f"/>
<rect x="11.5" y="158.6" width="2.2" height="1.6" fill="#8a5560"/>
<rect x="1.3" y="164.6" width="12.0" height="1.6" fill="#7d838f"/>
<rect x="14.5" y="164.6" width="3.7" height="1.6" fill="#84606a"/>
<rect x="6.5" y="167.6" width="9.0" height="1.6" fill="#84606a"/>
<rect x="16.3" y="167.6" width="6.0" height="1.6" fill="#6d6390"/>
<rect x="23.1" y="167.6" width="11.4" height="1.6" fill="#6a7688"/>
<rect x="6.5" y="170.6" width="22.0" height="1.6" fill="#6d6390"/>
<rect x="29.7" y="170.6" width="12.0" height="1.6" fill="#6a7688"/>
<rect x="43.3" y="170.6" width="6.0" height="1.6" fill="#5d7a94"/>
<rect x="50.9" y="170.6" width="4.0" height="1.6" fill="#7d838f"/>
<rect x="55.7" y="170.6" width="16.0" height="1.6" fill="#84606a"/>
<rect x="72.9" y="170.6" width="6.0" height="1.6" fill="#6d6390"/>
<rect x="80.5" y="170.6" width="11.0" height="1.6" fill="#6a7688"/>
<rect x="6.5" y="173.6" width="16.0" height="1.6" fill="#6a7688"/>
<rect x="23.7" y="173.6" width="22.0" height="1.6" fill="#5d7a94"/>
<rect x="46.5" y="173.6" width="4.1" height="1.6" fill="#7d838f"/>
<rect x="6.5" y="179.6" width="16.0" height="1.6" fill="#7d838f"/>
<rect x="23.7" y="179.6" width="5.1" height="1.6" fill="#84606a"/>
<rect x="6.5" y="182.6" width="6.0" height="1.6" fill="#84606a"/>
<rect x="14.1" y="182.6" width="16.0" height="1.6" fill="#6d6390"/>
<rect x="31.7" y="182.6" width="4.1" height="1.6" fill="#6a7688"/>
<rect x="6.5" y="185.6" width="6.0" height="1.6" fill="#6d6390"/>
<rect x="14.1" y="185.6" width="6.0" height="1.6" fill="#6a7688"/>
<rect x="20.9" y="185.6" width="10.2" height="1.6" fill="#5d7a94"/>
<rect x="6.5" y="191.6" width="6.0" height="1.6" fill="#5d7a94"/>
<rect x="13.3" y="191.6" width="16.0" height="1.6" fill="#7d838f"/>
<rect x="30.5" y="191.6" width="6.1" height="1.6" fill="#84606a"/>
<rect x="6.5" y="194.6" width="4.0" height="1.6" fill="#7d838f"/>
<rect x="11.3" y="194.6" width="9.0" height="1.6" fill="#84606a"/>
<rect x="21.5" y="194.6" width="9.0" height="1.6" fill="#6d6390"/>
<rect x="31.3" y="194.6" width="5.3" height="1.6" fill="#6a7688"/>
<rect x="6.5" y="200.6" width="9.0" height="1.6" fill="#6d6390"/>
<rect x="16.7" y="200.6" width="17.8" height="1.6" fill="#6a7688"/>
<rect x="6.5" y="206.6" width="9.0" height="1.6" fill="#5d7a94"/>
<rect x="16.3" y="206.6" width="2.6" height="1.6" fill="#7d838f"/>
<rect x="6.5" y="209.6" width="6.0" height="1.6" fill="#7d838f"/>
<rect x="13.7" y="209.6" width="6.0" height="1.6" fill="#84606a"/>
<rect x="20.9" y="209.6" width="6.0" height="1.6" fill="#6d6390"/>
<rect x="28.1" y="209.6" width="16.0" height="1.6" fill="#6a7688"/>
<rect x="45.7" y="209.6" width="4.0" height="1.6" fill="#5d7a94"/>
<rect x="50.9" y="209.6" width="3.0" height="1.6" fill="#7d838f"/>
<rect x="6.5" y="215.6" width="12.4" height="1.6" fill="#6d6390"/>
<rect x="6.5" y="218.6" width="22.0" height="1.6" fill="#6a7688"/>
<rect x="29.3" y="218.6" width="9.9" height="1.6" fill="#5d7a94"/>
<rect x="11.1" y="221.6" width="6.0" height="1.6" fill="#5d7a94"/>
<rect x="18.3" y="221.6" width="6.0" height="1.6" fill="#7d838f"/>
<rect x="25.5" y="221.6" width="10.2" height="1.6" fill="#84606a"/>
<rect x="11.1" y="227.6" width="4.0" height="1.6" fill="#84606a"/>
<rect x="16.7" y="227.6" width="10.0" height="1.6" fill="#6d6390"/>
<rect x="11.1" y="230.6" width="12.0" height="1.6" fill="#6d6390"/>
<rect x="24.7" y="230.6" width="4.0" height="1.6" fill="#6a7688"/>
<rect x="11.1" y="233.6" width="6.0" height="1.6" fill="#6a7688"/>
<rect x="17.9" y="233.6" width="6.0" height="1.6" fill="#5d7a94"/>
<rect x="24.7" y="233.6" width="1.2" height="1.6" fill="#7d838f"/>
<rect x="6.5" y="236.6" width="1.0" height="1.6" fill="#5d7a94"/>
<rect x="6.5" y="239.6" width="6.0" height="1.6" fill="#7d838f"/>
<rect x="14.1" y="239.6" width="4.8" height="1.6" fill="#84606a"/>
<rect x="11.1" y="242.6" width="6.5" height="1.6" fill="#84606a"/>
<rect x="15.0" y="245.6" width="6.0" height="1.6" fill="#6d6390"/>
<rect x="22.6" y="245.6" width="16.0" height="1.6" fill="#6a7688"/>
<rect x="11.1" y="248.6" width="1.3" height="1.6" fill="#6a7688"/>
<rect x="11.1" y="251.6" width="13.5" height="1.6" fill="#5d7a94"/>
<rect x="15.0" y="257.6" width="4.0" height="1.6" fill="#84606a"/>
<rect x="20.6" y="257.6" width="22.0" height="1.6" fill="#6d6390"/>
<rect x="43.4" y="257.6" width="5.3" height="1.6" fill="#6a7688"/>
<rect x="15.0" y="263.6" width="6.0" height="1.6" fill="#6a7688"/>
<rect x="21.8" y="263.6" width="9.0" height="1.6" fill="#5d7a94"/>
<rect x="20.2" y="266.6" width="9.0" height="1.6" fill="#5d7a94"/>
<rect x="30.8" y="266.6" width="6.0" height="1.6" fill="#7d838f"/>
<rect x="38.4" y="266.6" width="9.0" height="1.6" fill="#84606a"/>
<rect x="15.0" y="269.6" width="1.3" height="1.6" fill="#7d838f"/>
<rect x="11.1" y="272.6" width="1.3" height="1.6" fill="#84606a"/>
<rect x="11.1" y="278.6" width="14.8" height="1.6" fill="#6a7688"/>
<rect x="6.5" y="284.6" width="1.0" height="1.6" fill="#7d838f"/>
<rect x="6.5" y="287.6" width="16.0" height="1.6" fill="#84606a"/>
<rect x="24.1" y="287.6" width="9.1" height="1.6" fill="#6d6390"/>
<rect x="11.1" y="290.6" width="6.0" height="1.6" fill="#6d6390"/>
<rect x="18.7" y="290.6" width="6.0" height="1.6" fill="#6a7688"/>
<rect x="26.3" y="290.6" width="9.4" height="1.6" fill="#5d7a94"/>
<rect x="11.1" y="296.6" width="12.0" height="1.6" fill="#5d7a94"/>
<rect x="23.9" y="296.6" width="2.8" height="1.6" fill="#7d838f"/>
<rect x="11.1" y="299.6" width="6.0" height="1.6" fill="#7d838f"/>
<rect x="17.9" y="299.6" width="6.0" height="1.6" fill="#84606a"/>
<rect x="25.1" y="299.6" width="4.1" height="1.6" fill="#6d6390"/>
<rect x="11.1" y="302.6" width="4.0" height="1.6" fill="#84606a"/>
<rect x="16.7" y="302.6" width="4.0" height="1.6" fill="#6d6390"/>
<rect x="21.9" y="302.6" width="9.2" height="1.6" fill="#6a7688"/>
<rect x="15.0" y="305.6" width="16.0" height="1.6" fill="#6d6390"/>
<rect x="32.6" y="305.6" width="12.0" height="1.6" fill="#6a7688"/>
<rect x="11.1" y="308.6" width="1.3" height="1.6" fill="#6a7688"/>
<rect x="6.5" y="311.6" width="1.0" height="1.6" fill="#5d7a94"/>
<rect x="6.5" y="314.6" width="9.0" height="1.6" fill="#7d838f"/>
<rect x="16.3" y="314.6" width="4.0" height="1.6" fill="#84606a"/>
<rect x="21.9" y="314.6" width="6.9" height="1.6" fill="#6d6390"/>
<rect x="11.1" y="317.6" width="4.0" height="1.6" fill="#84606a"/>
<rect x="15.9" y="317.6" width="12.0" height="1.6" fill="#6d6390"/>
<rect x="29.1" y="317.6" width="16.0" height="1.6" fill="#6a7688"/>
<rect x="46.7" y="317.6" width="2.0" height="1.6" fill="#5d7a94"/>
<rect x="11.1" y="320.6" width="6.0" height="1.6" fill="#6d6390"/>
<rect x="18.7" y="320.6" width="9.0" height="1.6" fill="#6a7688"/>
<rect x="28.9" y="320.6" width="1.6" height="1.6" fill="#5d7a94"/>
<rect x="15.0" y="323.6" width="12.0" height="1.6" fill="#6a7688"/>
<rect x="28.6" y="323.6" width="2.5" height="1.6" fill="#5d7a94"/>
<rect x="15.0" y="329.6" width="16.0" height="1.6" fill="#7d838f"/>
<rect x="11.1" y="332.6" width="1.3" height="1.6" fill="#84606a"/>
<rect x="6.5" y="338.6" width="1.0" height="1.6" fill="#6a7688"/>
<rect x="6.5" y="341.6" width="12.0" height="1.6" fill="#5d7a94"/>
<rect x="19.3" y="341.6" width="12.0" height="1.6" fill="#7d838f"/>
<rect x="32.5" y="341.6" width="3.3" height="1.6" fill="#84606a"/>
<rect x="11.1" y="344.6" width="22.0" height="1.6" fill="#7d838f"/>
<rect x="33.9" y="344.6" width="12.0" height="1.6" fill="#84606a"/>
<rect x="46.7" y="344.6" width="6.0" height="1.6" fill="#6d6390"/>
<rect x="54.3" y="344.6" width="9.0" height="1.6" fill="#6a7688"/>
<rect x="64.1" y="344.6" width="6.0" height="1.6" fill="#5d7a94"/>
<rect x="71.7" y="344.6" width="22.0" height="1.6" fill="#7d838f"/>
<rect x="95.3" y="344.6" width="1.4" height="1.6" fill="#84606a"/>
<rect x="6.5" y="347.6" width="1.0" height="1.6" fill="#84606a"/>
<rect x="6.5" y="353.6" width="12.0" height="1.6" fill="#6a7688"/>
<rect x="19.3" y="353.6" width="17.3" height="1.6" fill="#5d7a94"/>
<rect x="11.1" y="356.6" width="12.0" height="1.6" fill="#5d7a94"/>
<rect x="24.3" y="356.6" width="6.0" height="1.6" fill="#7d838f"/>
<rect x="11.1" y="359.6" width="6.0" height="1.6" fill="#7d838f"/>
<rect x="17.9" y="359.6" width="12.6" height="1.6" fill="#84606a"/>
<rect x="15.0" y="362.6" width="16.0" height="1.6" fill="#84606a"/>
<rect x="32.2" y="362.6" width="9.0" height="1.6" fill="#6d6390"/>
<rect x="42.4" y="362.6" width="6.0" height="1.6" fill="#6a7688"/>
<rect x="49.6" y="362.6" width="9.0" height="1.6" fill="#5d7a94"/>
<rect x="59.4" y="362.6" width="22.0" height="1.6" fill="#7d838f"/>
<rect x="82.6" y="362.6" width="4.0" height="1.6" fill="#84606a"/>
<rect x="87.8" y="362.6" width="10.2" height="1.6" fill="#6d6390"/>
<rect x="11.1" y="365.6" width="1.8" height="1.6" fill="#6d6390"/>
<rect x="6.5" y="368.6" width="1.0" height="1.6" fill="#6a7688"/>
<rect x="1.3" y="371.6" width="9.0" height="1.6" fill="#5d7a94"/>
<rect x="1.3" y="377.6" width="16.0" height="1.6" fill="#747a86"/>
<rect x="18.5" y="377.6" width="5.6" height="1.6" fill="#8a7a62"/>
<rect x="6.5" y="380.6" width="4.0" height="1.6" fill="#8a7a62"/>
<rect x="11.3" y="380.6" width="4.0" height="1.6" fill="#6e7480"/>
<rect x="16.1" y="380.6" width="4.1" height="1.6" fill="#747a86"/>
<rect x="11.1" y="383.6" width="4.0" height="1.6" fill="#6e7480"/>
<rect x="15.9" y="383.6" width="9.0" height="1.6" fill="#747a86"/>
<rect x="25.7" y="383.6" width="1.0" height="1.6" fill="#8a7a62"/>
<rect x="11.1" y="386.6" width="9.0" height="1.6" fill="#747a86"/>
<rect x="21.3" y="386.6" width="6.0" height="1.6" fill="#8a7a62"/>
<rect x="28.9" y="386.6" width="14.6" height="1.6" fill="#6e7480"/>
<rect x="11.1" y="389.6" width="12.0" height="1.6" fill="#8a7a62"/>
<rect x="24.7" y="389.6" width="9.0" height="1.6" fill="#6e7480"/>
<rect x="11.1" y="392.6" width="9.0" height="1.6" fill="#6e7480"/>
<rect x="20.9" y="392.6" width="7.8" height="1.6" fill="#747a86"/>
<rect x="11.1" y="395.6" width="9.1" height="1.6" fill="#747a86"/>
<rect x="15.0" y="398.6" width="9.0" height="1.6" fill="#8a7a62"/>
<rect x="24.8" y="398.6" width="16.1" height="1.6" fill="#6e7480"/>
<rect x="15.0" y="401.6" width="9.0" height="1.6" fill="#6e7480"/>
<rect x="24.8" y="401.6" width="16.0" height="1.6" fill="#747a86"/>
<rect x="41.6" y="401.6" width="1.1" height="1.6" fill="#8a7a62"/>
<rect x="15.0" y="404.6" width="4.0" height="1.6" fill="#747a86"/>
<rect x="20.2" y="404.6" width="4.0" height="1.6" fill="#8a7a62"/>
<rect x="25.4" y="404.6" width="15.5" height="1.6" fill="#6e7480"/>
<rect x="15.0" y="407.6" width="9.0" height="1.6" fill="#8a7a62"/>
<rect x="25.6" y="407.6" width="6.0" height="1.6" fill="#6e7480"/>
<rect x="32.4" y="407.6" width="6.7" height="1.6" fill="#747a86"/>
<rect x="11.1" y="410.6" width="1.3" height="1.6" fill="#6e7480"/>
<rect x="11.1" y="416.6" width="6.0" height="1.6" fill="#8a7a62"/>
<rect x="18.3" y="416.6" width="2.4" height="1.6" fill="#6e7480"/>
<rect x="15.0" y="419.6" width="6.0" height="1.6" fill="#6e7480"/>
<rect x="22.2" y="419.6" width="22.0" height="1.6" fill="#747a86"/>
<rect x="45.4" y="419.6" width="1.2" height="1.6" fill="#8a7a62"/>
<rect x="15.0" y="422.6" width="9.0" height="1.6" fill="#747a86"/>
<rect x="25.2" y="422.6" width="3.5" height="1.6" fill="#8a7a62"/>
<rect x="11.1" y="425.6" width="1.3" height="1.6" fill="#8a7a62"/>
<rect x="6.5" y="428.6" width="1.0" height="1.6" fill="#6e7480"/>
<rect x="6.5" y="431.6" width="9.0" height="1.6" fill="#747a86"/>
<rect x="16.3" y="431.6" width="2.6" height="1.6" fill="#8a7a62"/>
<rect x="11.1" y="434.6" width="17.6" height="1.6" fill="#8a7a62"/>
<rect x="11.1" y="440.6" width="7.0" height="1.6" fill="#747a86"/>
<rect x="15.0" y="443.6" width="16.0" height="1.6" fill="#8a7a62"/>
<rect x="32.2" y="443.6" width="6.0" height="1.6" fill="#6e7480"/>
<rect x="39.4" y="443.6" width="1.5" height="1.6" fill="#747a86"/>
<rect x="15.0" y="446.6" width="22.0" height="1.6" fill="#6e7480"/>
<rect x="38.2" y="446.6" width="4.5" height="1.6" fill="#747a86"/>
<rect x="15.0" y="449.6" width="16.0" height="1.6" fill="#747a86"/>
<rect x="32.2" y="449.6" width="8.7" height="1.6" fill="#8a7a62"/>
<rect x="15.0" y="452.6" width="22.0" height="1.6" fill="#8a7a62"/>
<rect x="37.8" y="452.6" width="3.1" height="1.6" fill="#6e7480"/>
<rect x="15.0" y="458.6" width="6.0" height="1.6" fill="#747a86"/>
<rect x="22.6" y="458.6" width="1.5" height="1.6" fill="#8a7a62"/>
<rect x="20.2" y="461.6" width="6.0" height="1.6" fill="#8a7a62"/>
<rect x="27.4" y="461.6" width="9.0" height="1.6" fill="#6e7480"/>
<rect x="37.2" y="461.6" width="5.0" height="1.6" fill="#747a86"/>
<rect x="20.2" y="464.6" width="4.0" height="1.6" fill="#6e7480"/>
<rect x="25.8" y="464.6" width="15.1" height="1.6" fill="#747a86"/>
<rect x="20.2" y="467.6" width="12.0" height="1.6" fill="#747a86"/>
<rect x="33.0" y="467.6" width="4.0" height="1.6" fill="#8a7a62"/>
<rect x="15.0" y="470.6" width="1.8" height="1.6" fill="#8a7a62"/>
<rect x="15.0" y="476.6" width="13.7" height="1.6" fill="#747a86"/>
<rect x="20.2" y="479.6" width="9.0" height="1.6" fill="#8a7a62"/>
<rect x="30.8" y="479.6" width="6.0" height="1.6" fill="#6e7480"/>
<rect x="20.2" y="482.6" width="9.0" height="1.6" fill="#6e7480"/>
<rect x="30.0" y="482.6" width="12.0" height="1.6" fill="#747a86"/>
<rect x="42.8" y="482.6" width="6.0" height="1.6" fill="#8a7a62"/>
<rect x="50.0" y="482.6" width="6.5" height="1.6" fill="#6e7480"/>
<rect x="20.2" y="485.6" width="9.0" height="1.6" fill="#747a86"/>
<rect x="30.4" y="485.6" width="9.0" height="1.6" fill="#8a7a62"/>
<rect x="41.0" y="485.6" width="2.5" height="1.6" fill="#6e7480"/>
<rect x="20.2" y="491.6" width="4.0" height="1.6" fill="#6e7480"/>
<rect x="25.4" y="491.6" width="3.4" height="1.6" fill="#747a86"/>
<rect x="25.4" y="494.6" width="6.0" height="1.6" fill="#747a86"/>
<rect x="32.2" y="494.6" width="9.0" height="1.6" fill="#8a7a62"/>
<rect x="42.4" y="494.6" width="4.0" height="1.6" fill="#6e7480"/>
<rect x="47.6" y="494.6" width="8.4" height="1.6" fill="#747a86"/>
<rect x="25.4" y="497.6" width="13.0" height="1.6" fill="#8a7a62"/>
<rect x="25.4" y="500.6" width="6.0" height="1.6" fill="#6e7480"/>
<rect x="33.0" y="500.6" width="4.0" height="1.6" fill="#747a86"/>
<rect x="37.8" y="500.6" width="5.7" height="1.6" fill="#8a7a62"/>
<rect x="20.2" y="503.6" width="1.3" height="1.6" fill="#747a86"/>
<rect x="20.2" y="509.6" width="14.3" height="1.6" fill="#6e7480"/>
<rect x="25.4" y="512.6" width="12.0" height="1.6" fill="#747a86"/>
<rect x="38.2" y="512.6" width="9.0" height="1.6" fill="#8a7a62"/>
<rect x="48.4" y="512.6" width="4.2" height="1.6" fill="#6e7480"/>
<rect x="20.2" y="515.6" width="1.3" height="1.6" fill="#8a7a62"/>
<rect x="20.2" y="521.6" width="10.9" height="1.6" fill="#747a86"/>
<rect x="25.4" y="524.6" width="22.0" height="1.6" fill="#8a7a62"/>
<rect x="49.0" y="524.6" width="3.6" height="1.6" fill="#6e7480"/>
<rect x="20.2" y="527.6" width="1.3" height="1.6" fill="#6e7480"/>
<rect x="15.0" y="530.6" width="1.8" height="1.6" fill="#747a86"/>
<rect x="11.1" y="533.6" width="1.3" height="1.6" fill="#8a7a62"/>
<rect x="6.5" y="536.6" width="1.0" height="1.6" fill="#6e7480"/>
<rect x="1.3" y="539.6" width="6.0" height="1.6" fill="#747a86"/>
<rect x="8.1" y="539.6" width="3.1" height="1.6" fill="#8a7a62"/>
<rect x="65.6" y="209.6" width="14.3" height="1.6" fill="#6a7688"/>
<rect x="96.2" y="209.6" width="1.8" height="1.6" fill="#6a7688"/>
</g></svg>
<i id="vthumb"></i></div>
<div id="ibeam"></div>
</div>
<i id="rsep"></i>
<div id="right">
<div id="rtab">Web浏览器<svg class="abs" style="left:87px;top:10px" width="9" height="9" viewBox="0 0 9 9"><path d="M0.7 0.7 L8.3 8.3 M8.3 0.7 L0.7 8.3" stroke="#b6bbc4" stroke-width="1" fill="none"/></svg></div>
<div id="rbar">
<div id="url">http://localhost:5173/#/pages/exam/exam?item={%22id%22:9,%22testpaper_id%22:4,%22title%22</div>
<div id="dev">iPhone 6/7/8<i></i></div>
<svg class="abs" style="left:137px;top:43px" width="15" height="15" viewBox="0 0 15 15"><g fill="none" stroke="#c5c9d1" stroke-width="1.3"><path d="M3.5 3.5 H14 V14 H3.5 Z M0.8 0.8 L7 7 M0.8 4.6 V0.8 H4.6"/></g></svg>
<svg class="abs" style="left:167px;top:43px" width="15" height="15" viewBox="0 0 15 15"><g fill="none" stroke="#c5c9d1" stroke-width="1.3"><circle cx="7.5" cy="7.5" r="2.3"/><path d="M7.5 0.8 L9 2.6 L11.4 1.9 L11.9 4.3 L14.2 5.2 L13.2 7.5 L14.2 9.8 L11.9 10.7 L11.4 13.1 L9 12.4 L7.5 14.2 L6 12.4 L3.6 13.1 L3.1 10.7 L0.8 9.8 L1.8 7.5 L0.8 5.2 L3.1 4.3 L3.6 1.9 L6 2.6 Z" stroke-linejoin="round"/></g></svg>
<svg class="abs" style="left:198px;top:43px" width="15" height="15" viewBox="0 0 15 15"><g fill="none" stroke="#c5c9d1" stroke-width="1.3"><path d="M0.7 1.2 H14.3 V13.8 H0.7 Z M3.5 5 L6.3 7.5 L3.5 10 M7.5 10.3 H11.5"/></g></svg>
<svg class="abs" style="left:228px;top:43px" width="15" height="15" viewBox="0 0 15 15"><g fill="none" stroke="#c5c9d1" stroke-width="1.3"><path d="M14 7.5 H1.5 M6.5 2.2 L1.2 7.5 L6.5 12.8" stroke-width="1.6"/></g></svg>
<svg class="abs" style="left:257px;top:43px" width="15" height="15" viewBox="0 0 15 15"><path d="M1 7.5 H13.5 M8.5 2.2 L13.8 7.5 L8.5 12.8" fill="none" stroke="#8d939e" stroke-width="1.4"/></svg>
<svg class="abs" style="left:288px;top:43px" width="15" height="15" viewBox="0 0 15 15"><g fill="none" stroke="#c5c9d1" stroke-width="1.3"><path d="M12.6 4.4 A6 6 0 1 0 13.4 9"/><path d="M13.6 0.8 V4.8 H9.6"/></g></svg>
<svg class="abs" style="left:318px;top:43px" width="13" height="15" viewBox="0 0 13 15"><g fill="none" stroke="#c5c9d1" stroke-width="1.3"><path d="M1.2 7 H11.8 V13.8 H1.2 Z M3.6 7 V4 A2.9 2.9 0 0 1 9.4 3.4"/></g></svg>
<svg class="abs" style="left:349px;top:43px" width="14" height="14" viewBox="0 0 14 14"><g fill="none" stroke="#c5c9d1" stroke-width="1.3"><path d="M0.8 0.8 H5.6 V5.6 H0.8 Z M8.4 0.8 H13.2 V5.6 H8.4 Z M0.8 8.4 H5.6 V13.2 H0.8 Z M8.4 8.4 H10.6 V10.6 H8.4 Z M12.4 8.4 V10.6 M8.4 12.8 H10.2 M12.4 12.4 V13.4"/></g></svg>
</div>
<div id="phone">
<svg class="abs" style="left:13px;top:14px" width="11" height="18" viewBox="0 0 11 18"><path d="M9.5 1 L1.5 9 L9.5 17" fill="none" stroke="#111" stroke-width="1.8"/></svg>
<div class="pt" style="top:45px">正式考试</div>
<div class="pt" style="top:66px"><span style="letter-spacing:0.4px">1. </span>下列哪个数是6和8之间的数？ (单选题)</div>
<div class="rd" style="top:93px"><i></i><span>A. 5</span></div>
<div class="rd" style="top:123px"><i></i><span>B. 6</span></div>
<div class="rd" style="top:152px"><i></i><span>C. 7</span></div>
<div class="rd" style="top:182px"><i></i><span>D. 8</span></div>
<div class="pt" style="top:210px;line-height:21px"><span class="dis">上一题</span>下一题</div>
</div>
</div>
<div id="console">
<span class="ct act" style="left:22.5px;word-spacing:0.5px;letter-spacing:0.1px">fast_oj - Web</span><i id="cul"></i>
<span class="ct" style="left:152px">fast_oj-微信小程序</span>
<span id="badge">50</span>
<svg class="abs" style="left:1138px;top:26px" width="14" height="12" viewBox="0 0 14 12"><path d="M0 0 H3 L7 6.8 L11 0 H14 L7 12 Z" fill="#57b894"/></svg>
<svg class="abs" style="left:1168px;top:25px" width="13" height="13" viewBox="0 0 13 13"><g fill="none" stroke="#d3d6dc" stroke-width="1.2"><path d="M4 5 Q4 2.5 6.5 2.5 Q9 2.5 9 5 V9 Q9 12 6.5 12 Q4 12 4 9 Z M6.5 5 V11.5 M4 5 H9 M4 7.5 H1 M9 7.5 H12 M4 5.2 L1.6 3 M9 5.2 L11.4 3 M4.2 9.8 L1.6 12.2 M8.8 9.8 L11.4 12.2 M5 2.6 L4 0.8 M8 2.6 L9 0.8"/></g></svg>
<svg class="abs" style="left:1198px;top:25px" width="14" height="14" viewBox="0 0 14 14"><g fill="none" stroke="#d3d6dc" stroke-width="1.2"><path d="M2.2 4 A5.6 5.6 0 1 1 1.4 7.6 M1.2 1 L2 4.4 L5.4 3.8"/><path d="M5.6 4.8 L9.6 7 L5.6 9.2 Z"/></g></svg>
<svg class="abs" style="left:1228px;top:26px" width="13" height="13" viewBox="0 0 13 13"><g fill="none" stroke="#d3d6dc" stroke-width="1.2"><rect x="0.7" y="0.7" width="11.6" height="11.6"/><rect x="3" y="3" width="7" height="7" fill="#d3d6dc" stroke="none"/></g></svg>
<svg class="abs" style="left:1258px;top:25px" width="14" height="14" viewBox="0 0 14 14"><g fill="none" stroke="#d3d6dc" stroke-width="1.2"><path d="M10 0.8 H0.8 V13.2 H13.2 V6 M3.2 4.6 L5.8 7 L3.2 9.4 M6.8 9.8 H10 M12 0.2 V4.2 M10 2.2 H14"/></g></svg>
<svg class="abs" style="left:1288px;top:28px" width="14" height="9" viewBox="0 0 14 9"><g fill="none" stroke="#d3d6dc" stroke-width="1.2"><path d="M1 7.5 L7 1.5 L13 7.5" stroke-width="1.5"/></g></svg>
<svg class="abs" style="left:1317px;top:26px" width="15" height="12" viewBox="0 0 15 12"><g fill="none" stroke="#d3d6dc" stroke-width="1.2"><path d="M0.8 1.5 L7.2 10.5 M7.2 1.5 L0.8 10.5 M11.5 0.8 V11 M9 8.4 L11.5 11.2 L14 8.4"/></g></svg>
<div id="clog">
<div><b>16:06:58.051</b> [Vue warn]: Invalid prop: type check failed for prop "value". Expected String with value "2", got Number with value 2. \n at &lt;Radio</div>
<div>&gt;\nat &lt;Label&gt;\nat &lt;RadioGroup&gt;\nat &lt;View&gt;\nat &lt;Exam&gt;\nat &lt;AsyncComponentWrapper&gt;\nat &lt;PageBody&gt;\nat &lt;Page&gt;\nat &lt;Anonymous&gt;\nat &lt;KeepAlive&gt;\nat &lt;</div>
<div>RouterView&gt;\nat &lt;Layout&gt;\nat &lt;App&gt;</div>
<div><b>16:06:58.051</b> [Vue warn]: Invalid prop: type check failed for prop "value". Expected String with value "3", got Number with value 3. \n at &lt;Radio</div>
</div>
</div>
<div id="status">
<svg class="abs" style="left:27px;top:5px" width="14" height="14" viewBox="0 0 14 14"><circle cx="7" cy="7" r="6.2" fill="none" stroke="#b9bec7" stroke-width="1.2"/><circle cx="7" cy="5.4" r="2" fill="#b9bec7"/><path d="M3 11.4 Q7 6.4 11 11.4 Q7 14 3 11.4 Z" fill="#b9bec7"/></svg>
<span class="st" style="left:47px">未登录</span>
<svg class="abs" style="left:150px;top:6px" width="13" height="11" viewBox="0 0 13 11"><path d="M0 1 H2 M4 1 H12 M0 5.5 H2 M4 5.5 H12 M0 10 H2 M4 10 H12" stroke="#b9bec7" stroke-width="1.4" fill="none"/></svg>
<svg class="abs" style="left:175px;top:6px" width="13" height="11" viewBox="0 0 13 11"><path d="M0.6 0.6 H12.4 V10.4 H0.6 Z M3 3.2 L5.4 5.5 L3 7.8 M6.4 8 H9.6" stroke="#b9bec7" stroke-width="1.1" fill="none"/></svg>
<span class="st" style="left:1651px">行:15</span><span class="st" style="left:1690px">列:20</span>
<span class="st" style="left:1745px">UTF-8</span><span class="st" style="left:1805px">Vue</span>
<svg class="abs" style="left:1851px;top:4px" width="16" height="16" viewBox="0 0 16 16"><circle cx="8" cy="8" r="7.6" fill="#c3c7ce"/><path d="M8 3.4 V11 M4.8 8 L8 11.4 L11.2 8" stroke="#21252b" stroke-width="1.8" fill="none"/></svg>
<svg class="abs" style="left:1881px;top:4px" width="14" height="16" viewBox="0 0 14 16"><path d="M7 1 Q2.6 1.6 2.6 6.6 V10 L0.8 12.4 H13.2 L11.4 10 V6.6 Q11.4 1.6 7 1 Z" fill="#c3c7ce"/><path d="M5.2 13.6 Q7 16 8.8 13.6 Z" fill="#c3c7ce"/></svg>
</div>
<div id="taskbar">
<svg class="abs" style="left:16px;top:12px" width="16" height="16" viewBox="0 0 16 16"><path d="M0 2.2 L6.6 1.3 V7.6 H0 Z M7.6 1.15 L16 0 V7.6 H7.6 Z M0 8.5 H6.6 V14.8 L0 13.9 Z M7.6 8.5 H16 V16 L7.6 14.9 Z" fill="#fff"/></svg>
<svg class="abs" style="left:60px;top:9px" width="24" height="24" viewBox="0 0 24 24"><circle cx="14" cy="9.5" r="7" fill="none" stroke="#fff" stroke-width="2.2"/><path d="M9 15 L2 22" stroke="#fff" stroke-width="2.6" fill="none"/></svg>
<div class="ti" style="left:103px;width:152px"><span style="left:34px">视频</span></div>
<div class="ti" style="left:314px;width:151px"><span style="left:33px">题库管理 - 个人 2 ...</span></div>
<div class="ti" style="left:473px;width:152px"><span style="left:35px">phpstudy_pro</span></div>
<div class="ti act" style="left:631px;width:162px"><span style="left:37px">fast_oj/pages/exa...</span></div>
<div class="ti" style="left:797px;width:148px"><span style="left:33px">fast_oj - 微信开发...</span></div>
<div class="ti" style="left:953px;width:158px"><span style="left:37px">localhost - fa_oj.f...</span></div>
<div class="ti" style="left:1113px;width:157px"><span style="left:39px">2024-04-08 14-20...</span></div>
<svg class="abs" style="left:113px;top:9px" width="15" height="22" viewBox="0 0 15 22"><rect width="15" height="22" fill="#3b4a8c"/><rect x="2.5" y="2" width="10" height="8" fill="#8fb7d9"/><rect x="2.5" y="12" width="10" height="8" fill="#7aa86a"/><path d="M1.2 0 V22 M13.8 0 V22" stroke="#d8d8d8" stroke-width="1.4" stroke-dasharray="1.6 1.6"/></svg>
<svg class="abs" style="left:272px;top:8px" width="24" height="24" viewBox="0 0 24 24"><path d="M17.5 0.5 L23.5 3.3 V20.7 L17.5 23.5 L6 13.6 L2.2 16.6 L0.5 15.6 V8.4 L2.2 7.4 L6 10.4 Z M17.5 6.6 L10.4 12 L17.5 17.4 Z" fill="#2aa0e6" fill-rule="evenodd"/></svg>
<svg class="abs" style="left:318px;top:8px" width="26" height="26" viewBox="0 0 26 26"><circle cx="14" cy="12" r="11.5" fill="#1d8fd6"/><path d="M4 8 A11.5 11.5 0 0 1 25.5 12 Q24 17 17 17 Q12 16 13 11 Q9 5 4 8 Z" fill="#4ecf8a"/><path d="M3 14 Q6 6 13 9 Q9 12 12 18 Q15 23 21 21 A11.5 11.5 0 0 1 3 14 Z" fill="#1568b8"/><circle cx="6.5" cy="20" r="5.5" fill="#e9e9e9"/><circle cx="6.5" cy="20" r="3.4" fill="#3a6b7a"/></svg>
<svg class="abs" style="left:480px;top:8px" width="24" height="24" viewBox="0 0 24 24"><rect width="24" height="24" rx="3" fill="#2f8fe6"/><path d="M8.5 19.5 V5 H13 Q17.4 5 17.4 9.3 Q17.4 13.6 13 13.6 H8.5" fill="none" stroke="#fff" stroke-width="2.4"/></svg>
<svg class="abs" style="left:642px;top:8px" width="20" height="23" viewBox="0 0 20 23"><path d="M0 0 H20 L18.4 19 L10 23 L1.6 19 Z" fill="#1fb54a"/><path d="M5.8 5 V16.5 M14.2 5 V16.5 M5.8 10.6 H14.2" stroke="#fff" stroke-width="2" fill="none"/></svg>
<svg class="abs" style="left:802px;top:8px" width="24" height="24" viewBox="0 0 24 24"><path d="M12 1 Q23.5 1 23.5 10.5 Q23.5 20 12 20 Q10 20 8.6 19.6 L3.6 22.6 L4.8 17.6 Q0.5 15 0.5 10.5 Q0.5 1 12 1 Z" fill="#f2f2f2"/><path d="M7.5 7 L10.8 9.6 L7.5 12.2 M12.6 12.6 H16.8" stroke="#2fb55a" stroke-width="1.6" fill="none"/></svg>
<svg class="abs" style="left:962px;top:9px" width="24" height="24" viewBox="0 0 24 24"><g stroke="#7d6a10" stroke-width="0.8"><rect x="1" y="2" width="11" height="11" rx="2" fill="#d9c12c"/><rect x="11" y="6" width="11" height="11" rx="2" fill="#cdb424"/><rect x="5" y="11" width="11" height="12" rx="2" fill="#e6d04a"/></g></svg>
<svg class="abs" style="left:1124px;top:8px" width="24" height="24" viewBox="0 0 24 24"><rect width="24" height="24" rx="3" fill="#2d7fe0"/><path d="M1.5 22 L9.5 10.5 L15 18 L18 14.5 L22.5 22 Z" fill="#7fd0f7"/><path d="M1.5 22 L9.5 10.5 L17 22 Z" fill="#3ea9ee"/><circle cx="17.5" cy="5.5" r="2.2" fill="#fff"/></svg>
<svg class="abs" style="left:1675px;top:11px" width="18" height="17" viewBox="0 0 18 17"><path d="M2 3 L16 0.5 L17.5 13 L3.5 16.5 Z" fill="#e0352b"/><path d="M13 4.6 Q8 2.6 6.2 5.4 Q5.4 8 9.4 8.6 Q13 9.4 11.6 11.6 Q9.4 13.4 5 11.4" fill="none" stroke="#fff" stroke-width="2"/></svg>
<svg class="abs" style="left:1841px;top:11px" width="18" height="17" viewBox="0 0 18 17"><path d="M2 3 L16 0.5 L17.5 13 L3.5 16.5 Z" fill="#e0352b"/><path d="M13 4.6 Q8 2.6 6.2 5.4 Q5.4 8 9.4 8.6 Q13 9.4 11.6 11.6 Q9.4 13.4 5 11.4" fill="none" stroke="#fff" stroke-width="2"/></svg>
<svg class="abs" style="left:1718px;top:16px" width="14" height="8" viewBox="0 0 14 8"><path d="M1 7 L7 1.2 L13 7" stroke="#fff" stroke-width="1.5" fill="none"/></svg>
<svg class="abs" style="left:1742px;top:11px" width="14" height="17" viewBox="0 0 14 17"><path d="M7 0.8 L13.2 3 V8 Q13.2 13 7 16.2 Q0.8 13 0.8 8 V3 Z" fill="#2a52d8" stroke="#fff" stroke-width="1.3"/><path d="M3.6 6.4 L7 10 L10.4 6.4" fill="none" stroke="#fff" stroke-width="1.6"/></svg>
<svg class="abs" style="left:1766px;top:10px" width="12" height="20" viewBox="0 0 12 20"><rect x="3" y="0.8" width="6" height="11" rx="3" fill="#fff"/><path d="M0.8 8 Q0.8 14.4 6 14.4 Q11.2 14.4 11.2 8 M6 14.4 V18.4 M2.6 18.6 H9.4" fill="none" stroke="#fff" stroke-width="1.4"/></svg>
<svg class="abs" style="left:1788px;top:12px" width="18" height="17" viewBox="0 0 18 17"><path d="M5 1 H17 V11 H8 M11 11 V14.4 M7.6 14.6 H15 M0.8 2 H5.4 V15.6 H0.8 Z M2 5 H4.2" fill="none" stroke="#fff" stroke-width="1.3"/></svg>
<span id="ime">英</span>
<svg class="abs" style="left:1877px;top:9px" width="26" height="26" viewBox="0 0 26 26"><path d="M1 1 H18 V13.4 H6.4 L1 18 Z" fill="#fff"/><path d="M4 4.6 H15 M4 7.6 H15 M4 10.4 H11" stroke="#2f2f2f" stroke-width="1.1"/><circle cx="18.5" cy="18" r="6.4" fill="#2b2b2b" stroke="#e6e6e6" stroke-width="1.1"/></svg>
<span id="ncnt">1</span>
<i id="tedge"></i>
</div>
</body></html>
